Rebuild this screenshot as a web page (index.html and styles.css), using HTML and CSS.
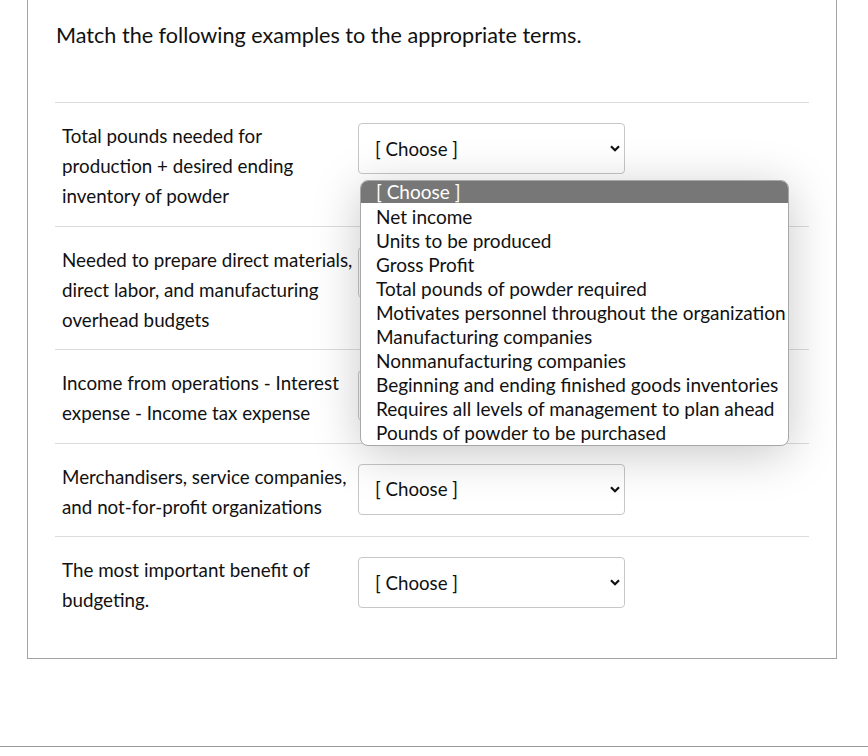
FILE: index.html
```html
<!DOCTYPE html>
<html lang="en">
<head>
    <meta charset="UTF-8">
    <meta name="viewport" content="width=device-width, initial-scale=1.0">
    <title>Matching Question</title>
    <link rel="stylesheet" href="styles.css">
</head>
<body>
    <div class="question">
        <p class="question-text">Match the following examples to the appropriate terms.</p>

        <div class="answers">
            <div class="answer">
                <label class="answer-label" for="match1">Total pounds needed for production + desired ending inventory of powder</label>
                <div class="select-wrap">
                    <select id="match1" class="answer-select">
                        <option>[ Choose ]</option>
                    </select>
                    <svg class="chevron" width="10" height="7" viewBox="0 0 10 7"><path d="M1 1.2 L5 5.2 L9 1.2" fill="none" stroke="#111" stroke-width="2.2"/></svg>

                    <!-- open option list of the first select -->
                    <ul class="option-list">
                        <li class="selected">[ Choose ]</li>
                        <li>Net income</li>
                        <li>Units to be produced</li>
                        <li>Gross Profit</li>
                        <li>Total pounds of powder required</li>
                        <li>Motivates personnel throughout the organization</li>
                        <li>Manufacturing companies</li>
                        <li>Nonmanufacturing companies</li>
                        <li>Beginning and ending finished goods inventories</li>
                        <li>Requires all levels of management to plan ahead</li>
                        <li>Pounds of powder to be purchased</li>
                    </ul>
                </div>
            </div>

            <div class="answer">
                <label class="answer-label" for="match2">Needed to prepare direct materials, direct labor, and manufacturing overhead budgets</label>
                <div class="select-wrap">
                    <select id="match2" class="answer-select">
                        <option>[ Choose ]</option>
                    </select>
                    <svg class="chevron" width="10" height="7" viewBox="0 0 10 7"><path d="M1 1.2 L5 5.2 L9 1.2" fill="none" stroke="#111" stroke-width="2.2"/></svg>
                </div>
            </div>

            <div class="answer">
                <label class="answer-label" for="match3">Income from operations - Interest expense - Income tax expense</label>
                <div class="select-wrap">
                    <select id="match3" class="answer-select">
                        <option>[ Choose ]</option>
                    </select>
                    <svg class="chevron" width="10" height="7" viewBox="0 0 10 7"><path d="M1 1.2 L5 5.2 L9 1.2" fill="none" stroke="#111" stroke-width="2.2"/></svg>
                </div>
            </div>

            <div class="answer">
                <label class="answer-label" for="match4">Merchandisers, service companies, and not-for-profit organizations</label>
                <div class="select-wrap">
                    <select id="match4" class="answer-select">
                        <option>[ Choose ]</option>
                    </select>
                    <svg class="chevron" width="10" height="7" viewBox="0 0 10 7"><path d="M1 1.2 L5 5.2 L9 1.2" fill="none" stroke="#111" stroke-width="2.2"/></svg>
                </div>
            </div>

            <div class="answer">
                <label class="answer-label" for="match5">The most important benefit of budgeting.</label>
                <div class="select-wrap">
                    <select id="match5" class="answer-select">
                        <option>[ Choose ]</option>
                    </select>
                    <svg class="chevron" width="10" height="7" viewBox="0 0 10 7"><path d="M1 1.2 L5 5.2 L9 1.2" fill="none" stroke="#111" stroke-width="2.2"/></svg>
                </div>
            </div>
        </div>
    </div>

    <div class="page-rule"></div>
</body>
</html>
```

FILE: styles.css
```css
body {
    margin: 0;
    font-family: Lato, "Open Sans", Arial, sans-serif;
    color: #111;
    background-color: #fff;
}

.question {
    width: 754px;
    margin-left: 27px;
    padding: 0 27px 28px 27px;
    border: 1px solid #a3a3a3;
    border-top: none;
}

.question-text {
    margin: 0 0 54px 1px;
    padding-top: 22px;
    font-size: 21.6px;
    line-height: 26px;
}

.answer {
    display: flex;
    align-items: flex-start;
    padding: 18px 7px 14.5px 7px;
    border-top: 1px solid #dcdcdc;
}

.answer-label {
    width: 292px;
    margin-right: 4px;
    font-size: 18.8px;
    line-height: 30px;
}

.select-wrap {
    position: relative;
    margin-top: 2px;
}

.answer-select {
    appearance: none;
    -webkit-appearance: none;
    display: block;
    width: 267px;
    height: 51px;
    padding: 0 30px 0 16px;
    border: 1px solid #c7c7c7;
    border-radius: 4px;
    background-color: #fff;
    font-family: Lato, "Open Sans", Arial, sans-serif;
    font-size: 18.7px;
    color: #111;
}

.chevron {
    position: absolute;
    right: 5px;
    top: 22px;
    pointer-events: none;
}

.option-list {
    position: absolute;
    top: 57px;
    left: 2px;
    z-index: 10;
    width: 427px;
    margin: 0;
    padding: 0;
    list-style: none;
    background-color: #fff;
    border: 1px solid #a8a8a8;
    border-radius: 8px;
    box-shadow: 0 8px 48px rgba(0, 0, 0, 0.22);
    overflow: hidden;
    font-size: 19px;
    line-height: 24px;
}

.option-list li {
    padding-left: 15px;
    white-space: nowrap;
}

.option-list li.selected {
    background-color: #777;
    color: #fff;
    line-height: 22px;
    margin-bottom: 2px;
}

.page-rule {
    margin-top: 87px;
    height: 1px;
    background-color: #9a9a9a;
}
```
